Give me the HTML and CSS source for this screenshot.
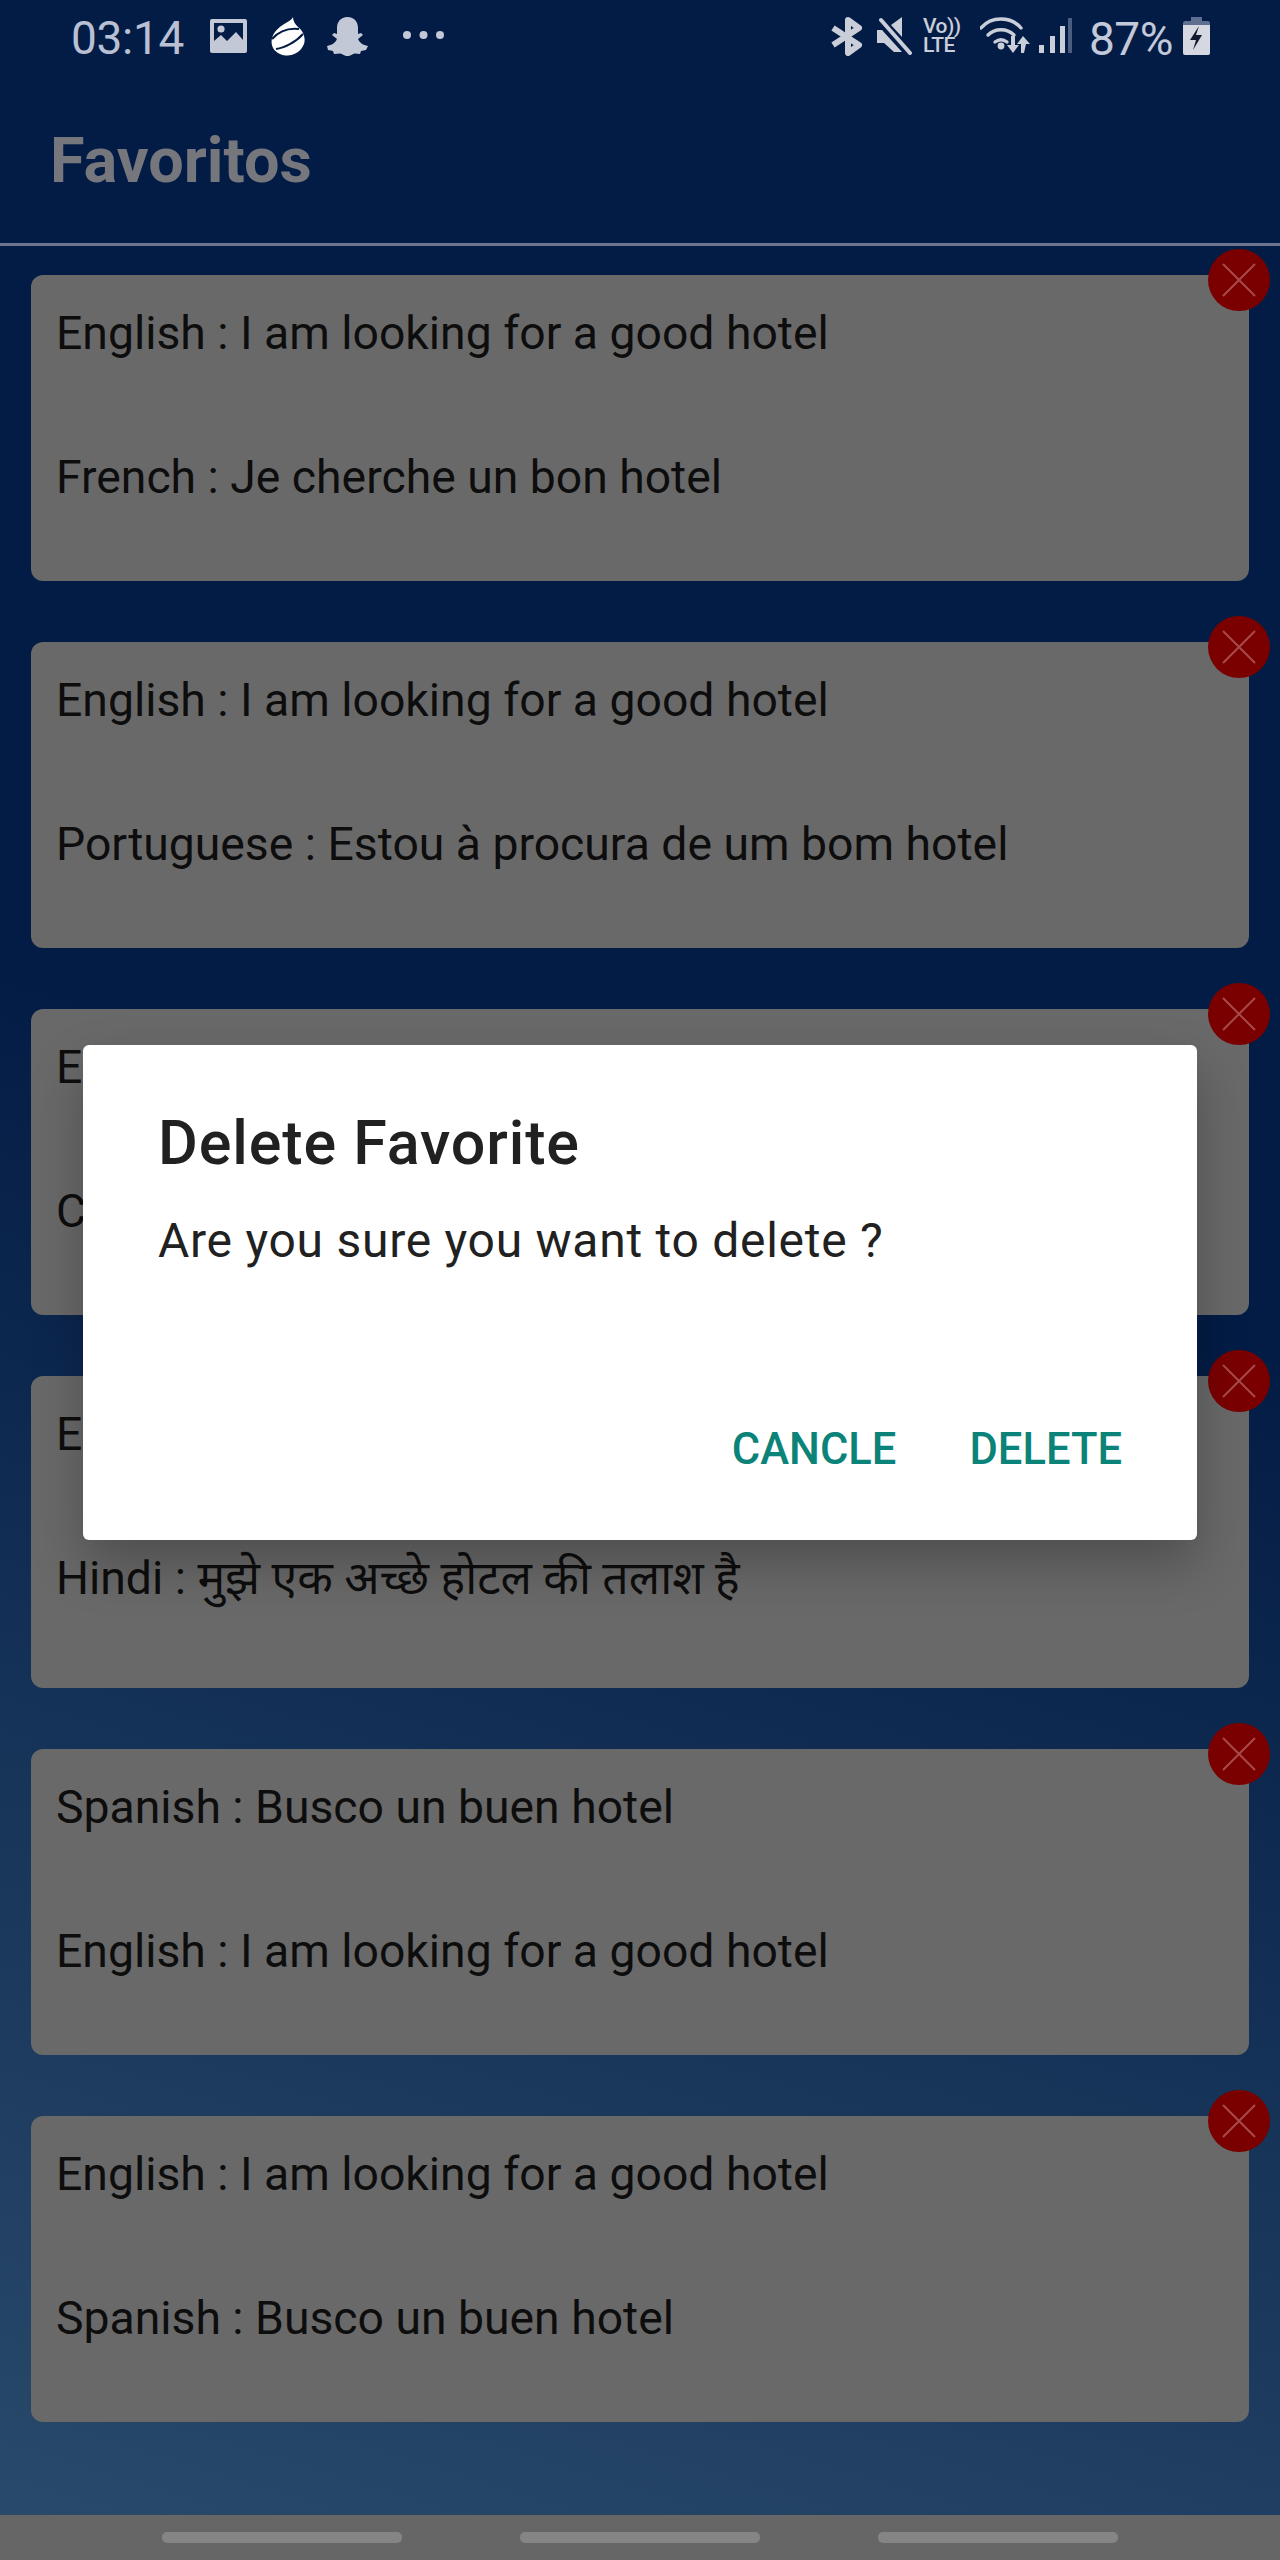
FILE: index.html
```html
<!DOCTYPE html>
<html lang="en">
<head>
<meta charset="utf-8">
<title>Favoritos</title>
<link rel="stylesheet" href="styles.css">
</head>
<body>
<div class="app">
  <header class="top">
    <div class="status">
      <div class="status-left">
        <span class="time">03:14</span>
        <svg class="ic ic-img" viewBox="0 0 37 34"><path fill="#c3c8d6" fill-rule="evenodd" d="M2 0h33a2 2 0 0 1 2 2v30a2 2 0 0 1-2 2H2a2 2 0 0 1-2-2V2a2 2 0 0 1 2-2zM4 4v18l7-6 6 6 9-9 7 8V4z"/><circle cx="11" cy="10" r="3.600" fill="#c3c8d6"/></svg>
        <svg class="ic ic-drop" viewBox="0 0 34 39"><path fill="#fff" d="M22 0c-1 4-12 7-18 15C-2 23 0 33 9 37c9 4 20 0 24-10 2-7-1-13-6-17-3-3-5-6-5-10z"/><path fill="none" stroke="#031c45" stroke-width="2" d="M1 22c8-9 18-11 27-10M5 32c8-1 20-7 27-15"/></svg>
        <svg class="ic ic-ghost" viewBox="0 0 41 39"><path fill="#c3c8d6" d="M20.500 0c7 0 10.500 5 10.500 11v6l3-1 2 2-5 4c2 4 5 6 10 7l-2 4-5 1-1 3-5-.5c-3 .5-4 2.500-7.500 2.500s-4.500-2-7.500-2.500L7 37l-1-3-5-1-1-4c5-1 8-3 10-7l-5-4 2-2 3 1v-6C10 5 13.500 0 20.500 0z"/></svg>
        <svg class="ic ic-dots" viewBox="0 0 41 8"><circle cx="4" cy="4" r="4" fill="#c3c8d6"/><circle cx="20.500" cy="4" r="4" fill="#c3c8d6"/><circle cx="37" cy="4" r="4" fill="#c3c8d6"/></svg>
      </div>
      <div class="status-right">
        <svg class="ic ic-bt" viewBox="0 0 35 39"><path fill="none" stroke="#c9ced9" stroke-width="6" stroke-linejoin="round" d="M4 11l26 17-11 8V3l11 8L4 28"/></svg>
        <svg class="ic ic-mute" viewBox="0 0 35 38"><path fill="#c9ced9" d="M0 13h5l20 22h-8L7 26H0zM14 8l11-8v20z"/><path stroke="#c9ced9" stroke-width="4" stroke-linecap="round" d="M4 3l29 33"/></svg>
        <div class="volte"><span>Vo))</span><span>LTE</span></div>
        <svg class="ic ic-wifi" viewBox="0 0 50 36"><g fill="none" stroke="#c9ced9" stroke-width="3.400" stroke-linecap="round"><path d="M1 11c10-12 30-12 40 0"/><path d="M8 18c7-7 19-7 26 0"/><path d="M15 25c4-3 8-3 12 0"/></g><circle cx="21" cy="29" r="3.400" fill="#c9ced9"/><path fill="#c9ced9" d="M31 19h4v9h4l-6 8-6-8h4zM44 36h-3v-9h-4l6-8 7 8h-4z"/></svg>
        <svg class="ic ic-signal" viewBox="0 0 33 35"><rect x="0" y="27" width="5" height="8" fill="#c9ced9"/><rect x="11" y="18" width="5" height="17" fill="#c9ced9"/><rect x="21" y="8" width="5" height="27" fill="#c9ced9"/><rect x="29" y="0" width="4" height="35" fill="#4b5d80"/></svg>
        <span class="pct">87%</span>
        <svg class="ic ic-batt" viewBox="0 0 27 38"><path fill="#5e6f8f" d="M8 0h11v4h6a2 2 0 0 1 2 2v5H0V6a2 2 0 0 1 2-2h6z"/><path fill="#d5d8e0" d="M0 8h27v28a2 2 0 0 1-2 2H2a2 2 0 0 1-2-2z"/><path fill="#10192f" d="M16 9L7 23h6l-3 10 9-15h-6z"/></svg>
      </div>
    </div>
    <h1 class="title">Favoritos</h1>
  </header>

  <main class="list">
    <article class="card">
      <p class="row">English : I am looking for a good hotel</p>
      <p class="row">French : Je cherche un bon hotel</p>
      <button class="remove"><svg viewBox="0 0 62 62"><path d="M15 15l32 32M47 15L15 47"/></svg></button>
    </article>
    <article class="card">
      <p class="row">English : I am looking for a good hotel</p>
      <p class="row">Portuguese : Estou à procura de um bom hotel</p>
      <button class="remove"><svg viewBox="0 0 62 62"><path d="M15 15l32 32M47 15L15 47"/></svg></button>
    </article>
    <article class="card">
      <p class="row">E</p>
      <p class="row">C</p>
      <button class="remove"><svg viewBox="0 0 62 62"><path d="M15 15l32 32M47 15L15 47"/></svg></button>
    </article>
    <article class="card card-tall">
      <p class="row">E</p>
      <p class="row">Hindi : मुझे एक अच्छे होटल की तलाश है</p>
      <button class="remove"><svg viewBox="0 0 62 62"><path d="M15 15l32 32M47 15L15 47"/></svg></button>
    </article>
    <article class="card">
      <p class="row">Spanish : Busco un buen hotel</p>
      <p class="row">English : I am looking for a good hotel</p>
      <button class="remove"><svg viewBox="0 0 62 62"><path d="M15 15l32 32M47 15L15 47"/></svg></button>
    </article>
    <article class="card">
      <p class="row">English : I am looking for a good hotel</p>
      <p class="row">Spanish : Busco un buen hotel</p>
      <button class="remove"><svg viewBox="0 0 62 62"><path d="M15 15l32 32M47 15L15 47"/></svg></button>
    </article>
  </main>

  <nav class="nav">
    <span class="pill"></span>
    <span class="pill"></span>
    <span class="pill"></span>
  </nav>

  <section class="dialog">
    <h2 class="dialog-title">Delete Favorite</h2>
    <p class="dialog-body">Are you sure you want to delete ?</p>
    <div class="dialog-actions">
      <button class="action">CANCLE</button>
      <button class="action">DELETE</button>
    </div>
  </section>
</div>
</body>
</html>
```

FILE: styles.css
```css
* { box-sizing: border-box; }
html, body { margin: 0; padding: 0; }
body { font-family: Roboto, "Noto Sans", "Noto Sans CJK SC", sans-serif; }

.app {
  position: relative;
  width: 1280px;
  height: 2560px;
  display: flex;
  flex-direction: column;
  background: linear-gradient(197deg, #031c45 0%, #031c45 46%, #2a4b6c 100%);
  overflow: hidden;
}

.top {
  height: 246px;
  background: #031c45;
  border-bottom: 3px solid #6d7590;
  padding: 17px 70px 0 71px;
  flex: none;
}
.status { display: flex; justify-content: space-between; height: 39px; }
.status-left, .status-right { display: flex; align-items: flex-start; }
.ic { display: block; flex: none; }
.time { font-size: 46px; font-weight: 400; line-height: 42px; letter-spacing: -0.3px; color: #b9c0d4; width: 139px; }
.ic-img { width: 37px; height: 34px; margin-top: 2px; }
.ic-drop { width: 34px; height: 39px; margin-left: 24px; }
.ic-ghost { width: 41px; height: 39px; margin-left: 22px; }
.ic-dots { width: 41px; height: 8px; margin: 14px 0 0 35px; }
.ic-bt { width: 35px; height: 39px; }
.ic-mute { width: 35px; height: 38px; margin-left: 13px; }
.volte { width: 38px; margin-left: 11px; display: flex; flex-direction: column; color: #c9ced9; font-weight: 500; font-size: 21px; line-height: 19px; letter-spacing: -0.5px; }
.ic-wifi { width: 50px; height: 36px; margin-left: 19px; }
.ic-signal { width: 33px; height: 35px; margin: 1px 0 0 9px; }
.pct { font-size: 46px; line-height: 42px; font-weight: 400; color: #c3c9d9; margin: 1px 0 0 17px; width: 83px; white-space: nowrap; letter-spacing: -0.5px; }
.ic-batt { width: 27px; height: 38px; margin-left: 11px; }

.title {
  margin: 70px 0 0 -21px;
  font-size: 63px;
  line-height: 70px;
  font-weight: 700;
  color: #76777d;
}

.list {
  flex: 1;
  padding: 29px 31px 0;
  display: flex;
  flex-direction: column;
  gap: 61px;
}
.card {
  position: relative;
  height: 306px;
  padding: 32px 25px 0;
  background: #696969;
  border-radius: 12px;
  flex: none;
}
.card-tall { height: 312px; }
.row {
  margin: 0 0 91px;
  font-size: 46.3px;
  line-height: 53px;
  color: #0d0d0d;
  white-space: nowrap;
  font-family: Roboto, "Noto Sans", "Noto Sans Devanagari", "Lohit Devanagari", "Noto Sans CJK SC", sans-serif;
}
.remove {
  position: absolute;
  top: -26px;
  right: -21px;
  width: 62px;
  height: 62px;
  padding: 0;
  border: 0;
  border-radius: 50%;
  background: #7a0000;
}
.remove svg { display: block; width: 62px; height: 62px; }
.remove path { fill: none; stroke: #a84a4a; stroke-width: 2; }

.nav {
  height: 45px;
  flex: none;
  background: #666;
  padding-top: 17px;
  display: flex;
  justify-content: center;
  gap: 118px;
}
.pill { width: 240px; height: 11px; border-radius: 5px; background: #858585; }

.dialog {
  position: absolute;
  left: 83px;
  top: 1045px;
  width: 1114px;
  height: 495px;
  background: #fff;
  border-radius: 6px;
  padding: 64px 75px 0 75px;
  box-shadow: 0 24px 50px rgba(0,0,0,.25);
  display: flex;
  flex-direction: column;
}
.dialog-title { margin: 0; font-size: 61px; line-height: 68px; font-weight: 500; letter-spacing: 0.9px; color: #212121; }
.dialog-body { margin: 36px 0 0; font-size: 48px; line-height: 56px; letter-spacing: 0.73px; color: #212121; white-space: nowrap; }
.dialog-actions { margin-top: 156px; display: flex; justify-content: flex-end; gap: 73px; }
.action { padding: 0; border: 0; background: none; font: 500 43.5px/50px Roboto, sans-serif; color: #0b8378; }
```
